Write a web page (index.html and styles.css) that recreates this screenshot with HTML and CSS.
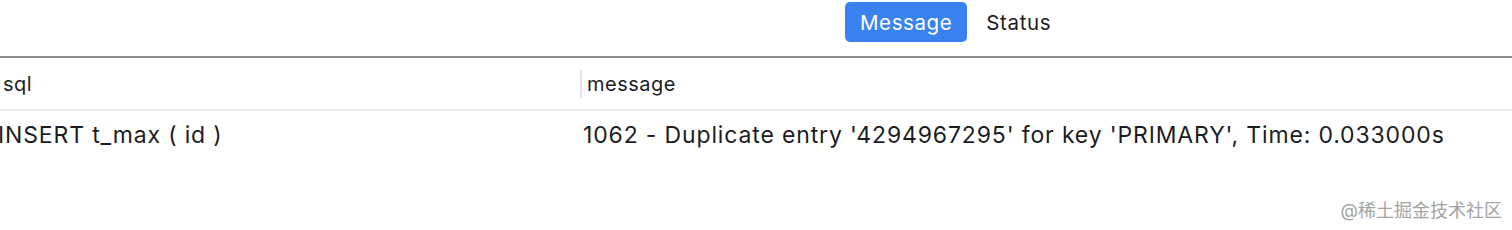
FILE: index.html
```html
<!DOCTYPE html>
<html lang="en">
<head>
  <meta charset="UTF-8" />
  <title>Query Result</title>
  <link rel="stylesheet" href="styles.css">
</head>
<body>
  <div class="tabs">
    <button class="tab active">Message</button>
    <button class="tab">Status</button>
  </div>

  <div class="result">
    <div class="row head">
      <div class="cell first">sql</div>
      <div class="cell second">message</div>
    </div>
    <div class="row">
      <div class="cell first">INSERT t_max ( id )</div>
      <div class="cell second">1062 - Duplicate entry '4294967295' for key 'PRIMARY', Time: 0.033000s</div>
    </div>
  </div>

  <div class="watermark">@稀土掘金技术社区</div>
</body>
</html>
```

FILE: styles.css
```css
body {
  margin: 0;
  font-family: Inter, "Liberation Sans", "Noto Sans CJK SC", sans-serif;
  color: #1d1d1f;
  background: #fff;
  position: relative;
  height: 230px;
  overflow: hidden;
}

.tabs {
  display: flex;
  align-items: flex-start;
  gap: 4px;
  height: 58px;
  padding: 2px 0 0 845px;
  border-bottom: 2px solid #8e8e8e;
  box-sizing: border-box;
}

.tab {
  font-family: inherit;
  font-size: 20.5px;
  letter-spacing: 0.6px;
  padding: 0 15px;
  height: 40px;
  border: none;
  border-radius: 5px;
  background: none;
  color: #1d1d1f;
}

.tab.active {
  background: #3a82f0;
  color: #fff;
}

.result {
  display: flex;
  flex-direction: column;
}

.row {
  display: grid;
  grid-template-columns: 580px 1fr;
  height: 48px;
  align-items: center;
  font-size: 23px;
  letter-spacing: 0.85px;
}

.row.head {
  height: 51px;
  font-size: 20px;
  letter-spacing: 0.5px;
  border-bottom: 2px solid #ececec;
}

.cell.first {
  text-indent: -2px;
}

.row.head .cell.first {
  text-indent: 3px;
}

.cell.second {
  padding-left: 3px;
}

.row.head .cell.second {
  border-left: 2px solid #e4e4e4;
  padding-left: 5px;
  line-height: 28px;
}

.watermark {
  position: absolute;
  right: 10px;
  top: 196px;
  font-size: 18px;
  color: #a3a3a3;
}
```
